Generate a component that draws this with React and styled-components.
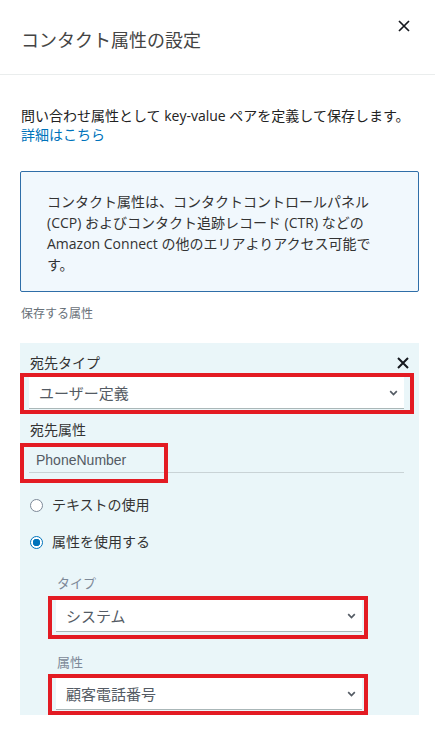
import React from "react";
import styled, { createGlobalStyle } from "styled-components";

const GlobalStyle = createGlobalStyle`
  html, body {
    margin: 0;
    padding: 0;
    background: #ffffff;
  }
  body {
    font-family: "Open Sans", "Noto Sans CJK JP", sans-serif;
    color: #16191f;
  }
`;

const Chevron = () => (
  <svg width="9" height="6" viewBox="0 0 9 6">
    <polyline points="1.2,1.2 4.5,4.5 7.8,1.2" fill="none" stroke="#545b64" strokeWidth="1.7" />
  </svg>
);

const CloseIcon = ({ size = 12, weight = 1.6 }) => (
  <svg width={size} height={size} viewBox="0 0 12 12">
    <path d="M1 1 L11 11 M11 1 L1 11" stroke="#16191f" strokeWidth={weight} fill="none" />
  </svg>
);

const Header = styled.header`
  display: flex;
  justify-content: space-between;
  height: 75px;
  box-sizing: border-box;
  padding: 0 25px 0 21px;
  margin-right: 4px;
  border-bottom: 1px solid #eaeded;
`;

const Title = styled.h1`
  margin: 29px 0 0;
  font-size: 18px;
  line-height: 22px;
  font-weight: 400;
  color: #444;
`;

const CloseButton = styled.button`
  border: 0;
  background: none;
  padding: 0;
  margin-top: 20px;
  align-self: flex-start;
  display: flex;
  cursor: pointer;
`;

const Body = styled.main`
  padding: 0 20px;
`;

const Intro = styled.p`
  margin: 31px 0 0 1px;
  font-size: 14px;
  line-height: 19px;
  color: #222;
`;

const Link = styled.a`
  color: #0073bb;
  text-decoration: none;
`;

const InfoBox = styled.div`
  margin-top: 27px;
  height: 121px;
  box-sizing: border-box;
  border: 1px solid #2f6ea8;
  border-radius: 2px;
  background: #f1f8fd;
  padding: 19px 10px 0 26px;
  font-size: 14px;
  line-height: 21px;
  color: #333;
  white-space: nowrap;
`;

const SectionLabel = styled.div`
  margin: 14px 0 0 1px;
  font-size: 12px;
  line-height: 16px;
  color: #687078;
`;

const Panel = styled.section`
  margin-top: 21px;
  background: #eaf6f9;
  padding: 10px 15px 5px 9px;
  display: flex;
  flex-direction: column;
`;

const LabelRow = styled.div`
  display: flex;
  justify-content: space-between;
  align-items: center;
  margin-top: ${(p) => p.$top || 0}px;
  padding-left: ${(p) => p.$indent || 1}px;
  font-size: ${(p) => (p.$muted ? 13 : 14)}px;
  line-height: 20px;
  color: ${(p) => (p.$muted ? "#7d8998" : "#333")};
`;

const RemoveButton = styled.button`
  border: 0;
  background: none;
  padding: 0;
  margin-right: -5px;
  display: flex;
`;

const Field = styled.div`
  position: relative;
  margin-top: ${(p) => p.$top || 0}px;
  margin-left: ${(p) => p.$indent || 0}px;
  width: ${(p) => p.$width || "auto"};
`;

const Select = styled.div`
  display: flex;
  align-items: center;
  justify-content: space-between;
  height: 32px;
  box-sizing: border-box;
  background: #fff;
  border-bottom: 1px solid #aab7b8;
  padding: 0 6px 0 10px;
  font-size: 15px;
  color: #545b64;
`;

const TextInput = styled.div`
  display: flex;
  align-items: center;
  height: 25px;
  box-sizing: border-box;
  border-bottom: 1px solid #c9d3d6;
  padding-left: 7px;
  font-family: "Liberation Sans", "Noto Sans CJK JP", sans-serif;
  font-size: 14px;
  color: #545b64;
`;

const Mark = styled.span`
  position: absolute;
  top: ${(p) => p.$t}px;
  left: ${(p) => p.$l}px;
  bottom: ${(p) => p.$b}px;
  ${(p) => (p.$w ? `width: ${p.$w}px;` : `right: ${p.$r}px;`)}
  border: 4px solid #e31b23;
  pointer-events: none;
`;

const Radio = styled.label`
  display: flex;
  align-items: center;
  gap: 9px;
  margin-top: ${(p) => p.$top}px;
  padding-left: 1px;
  font-size: 14px;
  line-height: 20px;
  color: #333;
`;

const Dot = styled.span`
  width: 13px;
  height: 13px;
  box-sizing: border-box;
  border-radius: 50%;
  border: ${(p) => (p.$on ? "1px solid #0073bb" : "1px solid #7d8998")};
  background: ${(p) =>
    p.$on ? "radial-gradient(circle, #0073bb 0 3.5px, #fff 4px)" : "#fff"};
  flex: none;
`;

export default function App() {
  return (
    <>
      <GlobalStyle />
      <Header>
        <Title>コンタクト属性の設定</Title>
        <CloseButton aria-label="閉じる">
          <CloseIcon size={12} weight={1.7} />
        </CloseButton>
      </Header>
      <Body>
        <Intro>
          問い合わせ属性として key-value ペアを定義して保存します。
          <br />
          <Link href="#">詳細はこちら</Link>
        </Intro>
        <InfoBox>
          コンタクト属性は、コンタクトコントロールパネル
          <br />
          (CCP) およびコンタクト追跡レコード (CTR) などの
          <br />
          Amazon Connect の他のエリアよりアクセス可能で
          <br />
          す。
        </InfoBox>
        <SectionLabel>保存する属性</SectionLabel>
        <Panel>
          <LabelRow>
            <span>宛先タイプ</span>
            <RemoveButton aria-label="削除">
              <CloseIcon size={12} weight={2} />
            </RemoveButton>
          </LabelRow>
          <Field $top={4}>
            <Select>
              ユーザー定義
              <Chevron />
            </Select>
            <Mark $t={-4} $l={-9} $r={-10} $b={-5} />
          </Field>
          <LabelRow $top={11}>宛先属性</LabelRow>
          <Field $top={8}>
            <TextInput>PhoneNumber</TextInput>
            <Mark $t={-5} $l={-9} $w={140} $b={-10} />
          </Field>
          <Radio $top={22}>
            <Dot />
            テキストの使用
          </Radio>
          <Radio $top={17}>
            <Dot $on />
            属性を使用する
          </Radio>
          <LabelRow $top={21} $indent={28} $muted>
            タイプ
          </LabelRow>
          <Field $top={7} $indent={27} $width="306px">
            <Select>
              システム
              <Chevron />
            </Select>
            <Mark $t={-4} $l={-8} $r={-6} $b={-7} />
          </Field>
          <LabelRow $top={20} $indent={28} $muted>
            属性
          </LabelRow>
          <Field $top={6} $indent={27} $width="306px">
            <Select>
              顧客電話番号
              <Chevron />
            </Select>
            <Mark $t={-4} $l={-8} $r={-6} $b={-5} />
          </Field>
        </Panel>
      </Body>
    </>
  );
}
